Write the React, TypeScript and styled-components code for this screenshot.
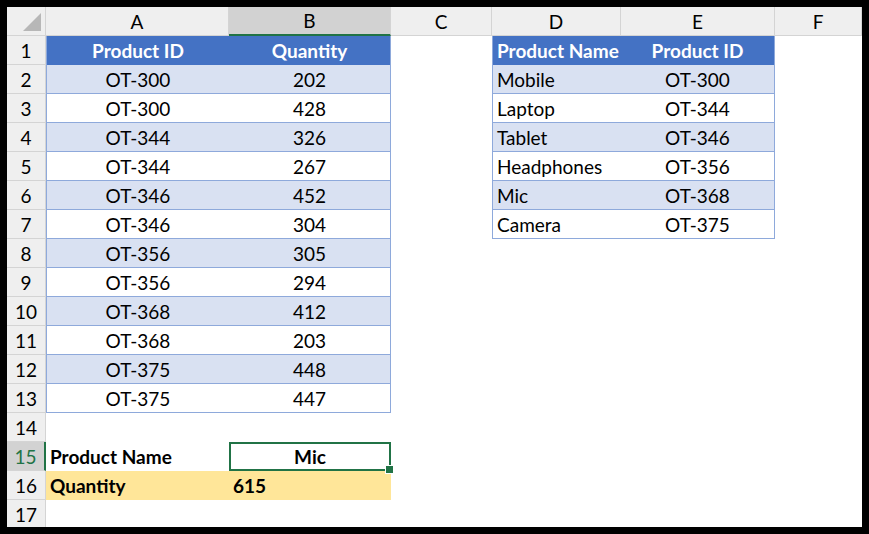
import React from "react";
import styled, { createGlobalStyle } from "styled-components";

const G = createGlobalStyle`
  html,body{margin:0;padding:0;background:#000;}
  body{font-family:Lato,"Open Sans",sans-serif;}
`;
const Frame = styled.div`
  width:869px;height:534px;box-sizing:border-box;padding:7px 7px 7px 7px;background:#000;
`;
const Sheet = styled.div`
  display:grid;background:#fff;width:855px;height:520px;overflow:hidden;
  grid-template-columns:39px 183px 162px 101px 129px 154px 87px;
  grid-template-rows:29px repeat(17,29px);
`;
const ColHead = styled.div<{ $sel?: boolean }>`
  background:${p => p.$sel ? "#d2d2d2" : "#efefef"};
  border-right:1px solid #d4d4d4;border-bottom:${p => p.$sel ? "2px solid #217346" : "1px solid #d4d4d4"};
  display:flex;align-items:center;justify-content:center;font-size:19px;color:#000;box-sizing:border-box;
`;
const Corner = styled(ColHead)`position:relative;`;
const Tri = styled.div`position:absolute;right:4px;bottom:4px;width:0;height:0;border-left:18px solid transparent;border-bottom:18px solid #b7b7b7;`;
const RowHead = styled.div<{ $sel?: boolean }>`
  background:${p => p.$sel ? "#d2d2d2" : "#efefef"};color:${p => p.$sel ? "#217346" : "#000"};
  border-bottom:1px solid #d4d4d4;border-right:${p => p.$sel ? "2px solid #217346" : "1px solid #d4d4d4"};
  display:flex;align-items:center;justify-content:center;font-size:19px;box-sizing:border-box;
`;
const Cell = styled.div<{ $bg?: string; $bold?: boolean; $align?: string; $color?: string; $b?: boolean }>`
  background:${p => p.$bg || "#fff"};font-weight:${p => p.$bold ? 700 : 400};color:${p => p.$color || "#000"};
  display:flex;align-items:center;justify-content:${p => p.$align || "center"};padding:0 4px;
  font-size:19px;box-sizing:border-box;white-space:nowrap;
  ${p => p.$b ? "border-bottom:1px solid #8ea9db;" : ""}
`;
const Active = styled(Cell)`border:2px solid #217346;position:relative;`;
const Handle = styled.div`position:absolute;right:-5px;bottom:-5px;width:7px;height:7px;background:#217346;border:1px solid #fff;`;
const TableEdge = styled.div<{ $l?: boolean }>`display:contents;`;

const left = [["OT-300",202],["OT-300",428],["OT-344",326],["OT-344",267],["OT-346",452],["OT-346",304],["OT-356",305],["OT-356",294],["OT-368",412],["OT-368",203],["OT-375",448],["OT-375",447]];
const right = [["Mobile","OT-300"],["Laptop","OT-344"],["Tablet","OT-346"],["Headphones","OT-356"],["Mic","OT-368"],["Camera","OT-375"]];
const BLUE="#4472c4", BAND="#d9e1f2";

export default function App(){
  const rows: React.ReactNode[] = [];
  for(let r=1;r<=17;r++){
    const band = r%2===0 ? BAND : "#fff";
    let a:React.ReactNode=null,b:React.ReactNode=null,d:React.ReactNode=null,e:React.ReactNode=null;
    const E=(k:string)=><Cell key={k}/>;
    if(r===1){
      a=<Cell key="a" $bg={BLUE} $bold $color="#fff" style={{borderLeft:"1px solid #8ea9db"}}>Product ID</Cell>;
      b=<Cell key="b" $bg={BLUE} $bold $color="#fff" style={{borderRight:"1px solid #8ea9db"}}>Quantity</Cell>;
    } else if(r<=13){
      const [id,q]=left[r-2];
      a=<Cell key="a" $bg={band} $b style={{borderLeft:"1px solid #8ea9db"}}>{id}</Cell>;
      b=<Cell key="b" $bg={band} $b style={{borderRight:"1px solid #8ea9db"}}>{q}</Cell>;
    } else if(r===15){
      a=<Cell key="a" $bold $align="flex-start">Product Name</Cell>;
      b=<Active key="b" $bold>Mic<Handle/></Active>;
    } else if(r===16){
      a=<Cell key="a" $bold $align="flex-start" $bg="#ffe699">Quantity</Cell>;
      b=<Cell key="b" $bold $align="flex-start" $bg="#ffe699">615</Cell>;
    } else { a=E("a"); b=E("b"); }
    if(r===1){
      d=<Cell key="d" $bg={BLUE} $bold $color="#fff" $align="flex-start" style={{borderLeft:"1px solid #8ea9db"}}>Product Name</Cell>;
      e=<Cell key="e" $bg={BLUE} $bold $color="#fff" style={{borderRight:"1px solid #8ea9db"}}>Product ID</Cell>;
    } else if(r<=7){
      const [n,id]=right[r-2];
      d=<Cell key="d" $bg={band} $b $align="flex-start" style={{borderLeft:"1px solid #8ea9db"}}>{n}</Cell>;
      e=<Cell key="e" $bg={band} $b style={{borderRight:"1px solid #8ea9db"}}>{id}</Cell>;
    } else { d=E("d"); e=E("e"); }
    rows.push(<RowHead key={"h"+r} $sel={r===15}>{r}</RowHead>,a,b,E("c"),d,e,E("f"));
  }
  return (<><G/><Frame><Sheet>
    <Corner><Tri/></Corner>
    {["A","B","C","D","E","F"].map(c=><ColHead key={c} $sel={c==="B"}>{c}</ColHead>)}
    {rows.map((n,i)=><React.Fragment key={i}>{n}</React.Fragment>)}
  </Sheet></Frame></>);
}
